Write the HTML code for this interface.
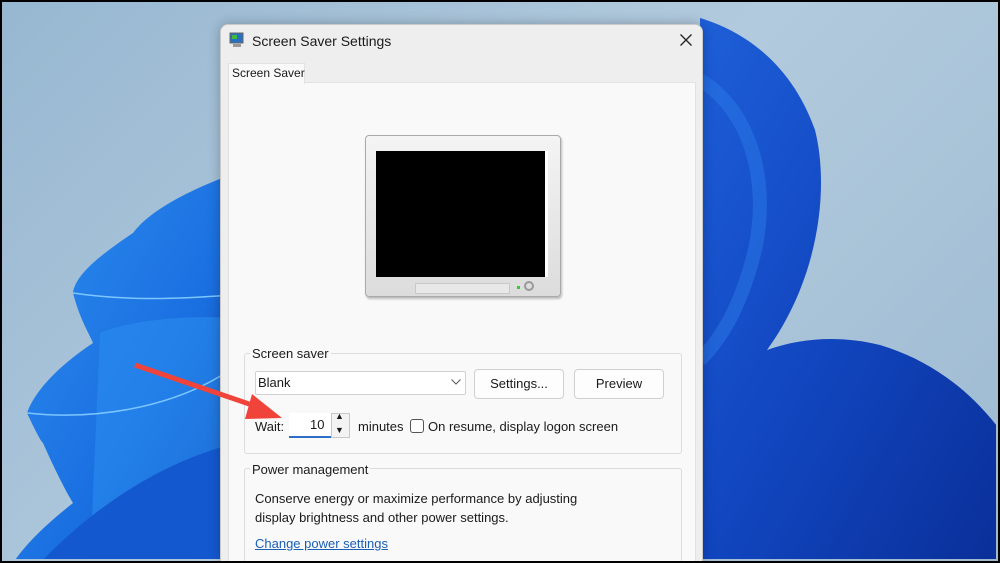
<!DOCTYPE html>
<html style="width:1000px;height:563px;overflow:hidden"><head><style>
*{margin:0;padding:0;box-sizing:border-box}
body{width:1000px;height:563px;overflow:hidden;position:relative;font-family:"Liberation Sans",sans-serif;background:#000}
#bg{position:absolute;left:2px;top:2px;width:996px;height:559px;background:linear-gradient(135deg,#97b7d1 0%,#b2cadd 50%,#9dbad2 100%);overflow:hidden}
.dlg{position:absolute;left:220px;top:24px;width:483px;height:537px;background:#eeeeee;border:1px solid #c9c9c9;border-bottom:none;border-radius:8px 8px 0 0;box-shadow:0 0 12px rgba(0,0,0,.25);overflow:hidden}
.t{position:absolute;font-size:13px;color:#1a1a1a;white-space:nowrap}
.panel{position:absolute;left:7px;top:57px;width:468px;height:490px;background:#f9f9f9;border:1px solid #e2e2e2}
.tab{position:absolute;left:7px;top:38px;width:77px;height:21px;background:#f9f9f9;border:1px solid #e2e2e2;border-bottom:none}
.grp{position:absolute;border:1px solid #dcdcdc;border-radius:3px}
.btn{position:absolute;background:#fdfdfd;border:1px solid #d0d0d0;border-radius:4px;font-size:13px;text-align:center;color:#1a1a1a}
</style></head><body>
<div id="bg">
<svg width="996" height="559" style="position:absolute;left:-2px;top:-2px">
<defs>
<linearGradient id="lg" x1="0" y1="0" x2="1" y2="1"><stop offset="0" stop-color="#2e8ef0"/><stop offset=".6" stop-color="#1a6fe0"/><stop offset="1" stop-color="#0a3aa8"/></linearGradient>
<linearGradient id="rg" x1="0" y1="0" x2="1" y2="1"><stop offset="0" stop-color="#1e5fd8"/><stop offset=".5" stop-color="#1146c0"/><stop offset="1" stop-color="#0a2f98"/></linearGradient>
</defs>
<path d="M230 175 C190 190 150 210 133 233 C100 255 75 275 73 293 C80 320 90 335 93 343 C60 365 35 390 27 413 C35 430 40 440 43 443 C55 470 65 490 73 503 C45 525 25 545 13 563 L230 563Z" fill="url(#lg)"/>
<path d="M100 333 C130 320 190 315 230 318 L230 563 L90 563Z" fill="#2a8cf0" opacity=".6"/>
<path d="M73 293 C120 300 170 300 230 295" stroke="#7cc6ff" stroke-width="1.5" fill="none"/>
<path d="M27 413 C90 420 170 410 230 370" stroke="#7cc6ff" stroke-width="1.5" fill="none"/>
<path d="M40 563 C100 500 170 460 230 445 L230 563Z" fill="#1458d0"/>
<path d="M700 18 C740 30 790 60 815 130 C830 190 818 280 767 350 C800 338 840 335 880 345 C930 360 970 390 1000 430 L1000 563 L700 563Z" fill="url(#rg)"/>
<path d="M700 80 C750 110 770 180 755 250 C740 310 720 340 700 360" stroke="#2a7ae8" stroke-width="14" fill="none" opacity=".5"/>
</svg>
</div>
<div class="dlg">
<svg style="position:absolute;left:8px;top:7px" width="16" height="16"><rect x="1" y="1" width="13" height="10" fill="#2a6fc0" stroke="#666"/><rect x="3" y="3" width="5" height="4" fill="#3cbb3c"/><rect x="4" y="12" width="8" height="3" fill="#999"/></svg>
<div class="t" style="left:31px;top:8px;font-size:14px">Screen Saver Settings</div>
<svg style="position:absolute;left:459px;top:9px" width="12" height="12"><path d="M0.5 0.5L11.5 11.5M11.5 0.5L0.5 11.5" stroke="#222" stroke-width="1.3"/></svg>
<div class="panel"></div>
<div class="tab"></div>
<div class="t" style="left:11px;top:41px;font-size:12px">Screen Saver</div>
<div style="position:absolute;left:144px;top:110px;width:196px;height:162px;background:linear-gradient(180deg,#f4f4f4,#dcdcdc);border:1px solid #aaa;border-radius:4px;box-shadow:1px 2px 2px rgba(0,0,0,.25)">
<div style="position:absolute;left:10px;top:15px;width:172px;height:126px;background:#000;border-right:3px solid #fff"></div>
<div style="position:absolute;left:49px;top:147px;width:95px;height:11px;border:1px solid #c8c8c8;background:#e8e8e8"></div>
<div style="position:absolute;left:151px;top:150px;width:3px;height:3px;background:#3c3"></div>
<div style="position:absolute;left:158px;top:145px;width:10px;height:10px;border:2px solid #999;border-radius:50%"></div>
</div>
<div class="grp" style="left:23px;top:328px;width:438px;height:101px"></div>
<div class="t" style="left:29px;top:321px;background:#f9f9f9;padding:0 2px">Screen saver</div>
<div style="position:absolute;left:34px;top:346px;width:211px;height:24px;background:#fff;border:1px solid #d0d0d0;border-radius:2px"></div>
<div class="t" style="left:37px;top:350px">Blank</div>
<svg style="position:absolute;left:230px;top:354px" width="10" height="6"><path d="M0.5 0.5L5 5L9.5 0.5" stroke="#555" fill="none"/></svg>
<div class="btn" style="left:253px;top:344px;width:90px;height:30px;line-height:28px">Settings...</div>
<div class="btn" style="left:353px;top:344px;width:90px;height:30px;line-height:28px">Preview</div>
<div class="t" style="left:34px;top:394px">Wait:</div>
<div style="position:absolute;left:68px;top:388px;width:42px;height:25px;background:#fff;border-bottom:2px solid #2e6fc6"></div>
<div class="t" style="left:89px;top:392px">10</div>
<div style="position:absolute;left:110px;top:388px;width:19px;height:25px;border:1px solid #c8c8c8;background:#f3f3f3"></div>
<div class="t" style="left:114px;top:386px;font-size:9px">▲</div>
<div class="t" style="left:114px;top:400px;font-size:9px">▼</div>
<div class="t" style="left:137px;top:394px">minutes</div>
<div style="position:absolute;left:189px;top:394px;width:14px;height:14px;border:1px solid #555;border-radius:3px;background:#fff"></div>
<div class="t" style="left:207px;top:394px">On resume, display logon screen</div>
<div class="grp" style="left:23px;top:443px;width:438px;height:110px"></div>
<div class="t" style="left:29px;top:437px;background:#f9f9f9;padding:0 2px">Power management</div>
<div class="t" style="left:34px;top:466px">Conserve energy or maximize performance by adjusting</div>
<div class="t" style="left:34px;top:485px">display brightness and other power settings.</div>
<div class="t" style="left:34px;top:511px;color:#1a5fb4;text-decoration:underline">Change power settings</div>
</div>
<svg width="1000" height="563" style="position:absolute;left:0;top:0">
<path d="M135 365 L258 407" stroke="#f0443a" stroke-width="5"/>
<path d="M282 418 L252 394 L245 419Z" fill="#f0443a"/>
<rect x="0" y="561" width="1000" height="2" fill="#000"/>
</svg>
</body></html>
